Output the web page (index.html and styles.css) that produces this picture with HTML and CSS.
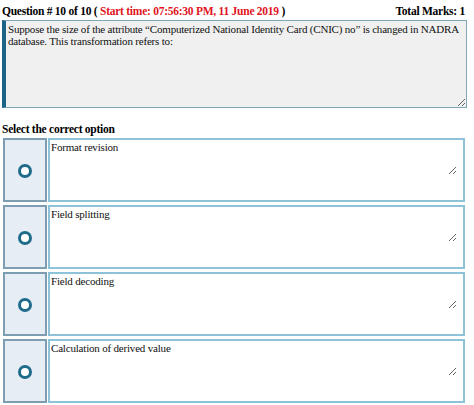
FILE: index.html
```html
<!DOCTYPE html>
<html>
<head>
<meta charset="utf-8">
<link rel="stylesheet" href="styles.css">
</head>
<body>
<div class="page">
  <div class="header">
    <div class="qtitle">Question # 10 of 10 ( <span class="start">Start time: 07:56:30 PM, 11 June 2019</span> )</div>
    <div class="marks">Total Marks: 1</div>
  </div>
  <textarea class="question" readonly>Suppose the size of the attribute “Computerized National Identity Card (CNIC) no” is changed in NADRA database. This transformation refers to:</textarea>
  <div class="select">Select the correct option</div>
  <div class="options">
    <div class="option">
      <div class="radio-cell"><span class="radio"></span></div>
      <div class="answer-cell"><textarea class="answer" readonly>Format revision</textarea></div>
    </div>
    <div class="option">
      <div class="radio-cell"><span class="radio"></span></div>
      <div class="answer-cell"><textarea class="answer" readonly>Field splitting</textarea></div>
    </div>
    <div class="option">
      <div class="radio-cell"><span class="radio"></span></div>
      <div class="answer-cell"><textarea class="answer" readonly>Field decoding</textarea></div>
    </div>
    <div class="option">
      <div class="radio-cell"><span class="radio"></span></div>
      <div class="answer-cell"><textarea class="answer" readonly>Calculation of derived value</textarea></div>
    </div>
  </div>
</div>
</body>
</html>
```
FILE: styles.css
```css
html, body {
  margin: 0;
  padding: 0;
  background: #fff;
}
.page {
  padding: 2px 9px 0 2px;
  font-family: "Liberation Serif", "Times New Roman", serif;
  color: #000;
}
.header {
  display: flex;
  justify-content: space-between;
  align-items: center;
  height: 18px;
  font-weight: bold;
  font-size: 11.5px;
  letter-spacing: -0.25px;
}
.start {
  color: #e0141e;
}
.question {
  display: block;
  box-sizing: border-box;
  width: 465px;
  height: 88px;
  margin: 0;
  padding: 2px 4px 2px 2px;
  border: 1px solid #7fa7b8;
  border-left: 4px solid #1d6489;
  background: #f0f0f0;
  font-family: "Liberation Serif", "Times New Roman", serif;
  font-size: 11px;
  letter-spacing: -0.19px;
  line-height: 12px;
  color: #111;
  resize: both;
  outline: none;
  overflow: hidden;
}
.select {
  font-weight: bold;
  font-size: 11.5px;
  letter-spacing: -0.25px;
  margin-top: 13px;
  height: 16px;
  line-height: 16px;
}
.options {
  display: flex;
  flex-direction: column;
  gap: 3px;
  margin-top: 1px;
  padding-left: 1px;
}
.option {
  display: flex;
  gap: 1px;
  height: 64px;
}
.radio-cell {
  box-sizing: border-box;
  width: 44px;
  border: 2px solid #7d9db2;
  background: #e7edf5;
  display: flex;
  align-items: center;
  justify-content: center;
}
.radio {
  box-sizing: border-box;
  width: 14px;
  height: 14px;
  border-radius: 50%;
  border: 3.5px solid #1e6b8a;
  background: #fff;
  margin-top: 2px;
}
.answer-cell {
  box-sizing: border-box;
  width: 417px;
  height: 64px;
  border: 2px solid #8cc3d8;
  background: #fff;
  padding: 0 6px 0 0;
}
.answer {
  display: block;
  box-sizing: border-box;
  width: 100%;
  height: 35px;
  margin: 0;
  padding: 1px 1px;
  border: none;
  background: #fff;
  font-family: "Liberation Serif", "Times New Roman", serif;
  font-size: 11px;
  letter-spacing: -0.19px;
  line-height: 12px;
  color: #111;
  outline: none;
  resize: both;
  overflow: hidden;
}
```
